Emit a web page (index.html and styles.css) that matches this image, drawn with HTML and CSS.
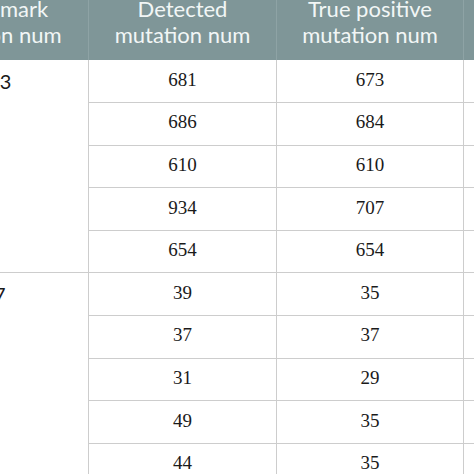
FILE: index.html
```html
<!DOCTYPE html>
<html>
<head>
<meta charset="utf-8">
<link rel="stylesheet" href="styles.css">
</head>
<body>
<div class="viewport">
  <table class="grid">
    <colgroup>
      <col class="c1"><col class="c2"><col class="c3"><col class="c4">
    </colgroup>
    <thead>
      <tr>
        <th>Benchmark<br>mutation num</th>
        <th>Detected<br>mutation num</th>
        <th>True positive<br>mutation num</th>
        <th>Precision<br>(%)</th>
      </tr>
    </thead>
    <tbody>
      <tr><td class="bench" rowspan="5">713</td><td>681</td><td>673</td><td>98.83</td></tr>
      <tr><td>686</td><td>684</td><td>99.71</td></tr>
      <tr><td>610</td><td>610</td><td>100</td></tr>
      <tr><td>934</td><td>707</td><td>75.70</td></tr>
      <tr><td>654</td><td>654</td><td>100</td></tr>
      <tr><td class="bench" rowspan="5">37</td><td>39</td><td>35</td><td>89.74</td></tr>
      <tr><td>37</td><td>37</td><td>100</td></tr>
      <tr><td>31</td><td>29</td><td>93.55</td></tr>
      <tr><td>49</td><td>35</td><td>71.43</td></tr>
      <tr><td>44</td><td>35</td><td>79.55</td></tr>
    </tbody>
  </table>
</div>
</body>
</html>
```

FILE: styles.css
```css
html, body {
  margin: 0;
  padding: 0;
  background: #ffffff;
}

.viewport {
  width: 474px;
  height: 474px;
  overflow: hidden;
}

.grid {
  border-collapse: collapse;
  table-layout: fixed;
  width: 714px;
  margin-left: -101px;
  margin-top: -17px;
}

.c1 { width: 189px; }
.c2 { width: 188px; }
.c3 { width: 187px; }
.c4 { width: 150px; }

.grid th {
  background: #7f9698;
  color: #f2f6f6;
  font-family: Lato, "Open Sans", sans-serif;
  font-weight: 400;
  font-size: 22px;
  line-height: 25.5px;
  padding: 13px 4px;
  text-align: center;
  border-right: 1.5px solid #8ea3a5;
}

.grid td {
  height: 42.6px;
  box-sizing: border-box;
  padding: 0 4px 3px;
  text-align: center;
  vertical-align: middle;
  font-family: "Liberation Serif", "Times New Roman", serif;
  font-size: 19px;
  color: #1a1a1a;
  border: 1.5px solid #cdcdcd;
}

.grid td.bench {
  vertical-align: top;
  padding-top: 9px;
  font-family: Lato, "Open Sans", sans-serif;
  font-size: 20px;
  line-height: 24px;
}

.grid tbody tr:first-child td {
  border-top: none;
}
```
